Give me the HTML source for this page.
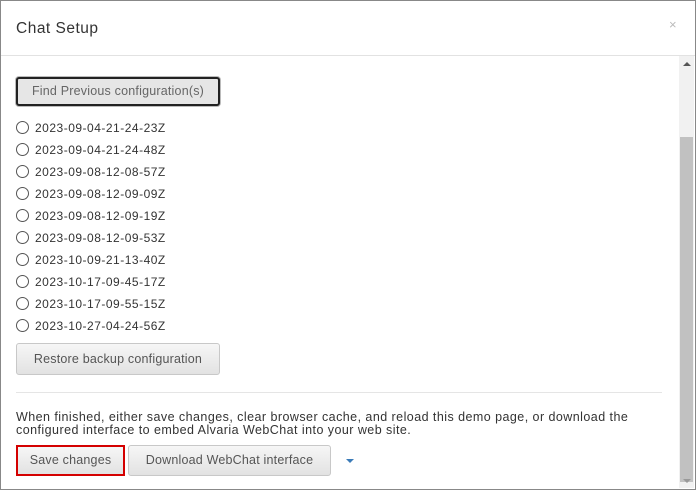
<!DOCTYPE html>
<html><head><style>
*{box-sizing:border-box;margin:0;padding:0}
body{width:697px;height:491px;background:#fff;font-family:"Liberation Sans",sans-serif;color:#333;position:relative;overflow:hidden}
.frame{position:absolute;left:0;top:0;width:696px;height:490px;border:1px solid #888}
.abs{position:absolute}
.title{left:16px;top:20px;font-size:15.5px;color:#333;letter-spacing:0.5px}
.close{left:669px;top:17px;font-size:13px;color:#bbb}
.hr{left:1px;top:55px;width:694px;height:1px;background:#e2e2e2}
.btn{position:absolute;background:linear-gradient(#f6f6f6,#e2e2e2);border:1px solid #c8c8c8;border-radius:3px;font-size:12.5px;color:#555;text-align:center;letter-spacing:0.2px}
.row{position:absolute;left:16px;font-size:12px;color:#333;height:16px;line-height:16px;letter-spacing:0.5px}
.row i{display:inline-block;width:13px;height:13px;border:1px solid #555;border-radius:50%;vertical-align:-2px;margin-right:6px}
.sb{left:679px;top:56px;width:15px;height:432px;background:#f1f1f1}
.thumb{left:680px;top:137px;width:13px;height:345px;background:#c1c1c1}
</style></head><body>
<div class="frame"></div>
<div class="abs title">Chat Setup</div>
<div class="abs close">×</div>
<div class="abs hr"></div>
<div class="btn" style="left:16px;top:77px;width:204px;height:29px;line-height:25px;border:2px solid #222;box-shadow:0 0 0 1px #bbb;background:#e6e6e6;color:#666">Find Previous configuration(s)</div>
<div class="row" style="top:120px"><i></i>2023-09-04-21-24-23Z</div>
<div class="row" style="top:142px"><i></i>2023-09-04-21-24-48Z</div>
<div class="row" style="top:164px"><i></i>2023-09-08-12-08-57Z</div>
<div class="row" style="top:186px"><i></i>2023-09-08-12-09-09Z</div>
<div class="row" style="top:208px"><i></i>2023-09-08-12-09-19Z</div>
<div class="row" style="top:230px"><i></i>2023-09-08-12-09-53Z</div>
<div class="row" style="top:252px"><i></i>2023-10-09-21-13-40Z</div>
<div class="row" style="top:274px"><i></i>2023-10-17-09-45-17Z</div>
<div class="row" style="top:296px"><i></i>2023-10-17-09-55-15Z</div>
<div class="row" style="top:318px"><i></i>2023-10-27-04-24-56Z</div>
<div class="btn" style="left:16px;top:343px;width:204px;height:32px;line-height:30px">Restore backup configuration</div>
<div class="abs" style="left:16px;top:392px;width:646px;height:1px;background:#e5e5e5"></div>
<div class="abs" style="left:16px;top:411px;font-size:12.5px;line-height:13px;color:#333;white-space:nowrap;letter-spacing:0.45px">When finished, either save changes, clear browser cache, and reload this demo page, or download the<br>configured interface to embed Alvaria WebChat into your web site.</div>
<div class="btn" style="left:16px;top:445px;width:109px;height:31px;line-height:27px;border:2px solid #d40000;border-radius:0">Save changes</div>
<div class="btn" style="left:128px;top:445px;width:203px;height:31px;line-height:29px">Download WebChat interface</div>
<div class="abs" style="left:346px;top:459px;width:0;height:0;border-left:4px solid transparent;border-right:4px solid transparent;border-top:4px solid #3a7bb8"></div>
<div class="abs sb"></div>
<div class="abs thumb"></div>
<div class="abs" style="left:683px;top:62px;border-left:4px solid transparent;border-right:4px solid transparent;border-bottom:4px solid #555"></div>
<div class="abs" style="left:683px;top:479px;border-left:4px solid transparent;border-right:4px solid transparent;border-top:4px solid #999"></div>
</body></html>
